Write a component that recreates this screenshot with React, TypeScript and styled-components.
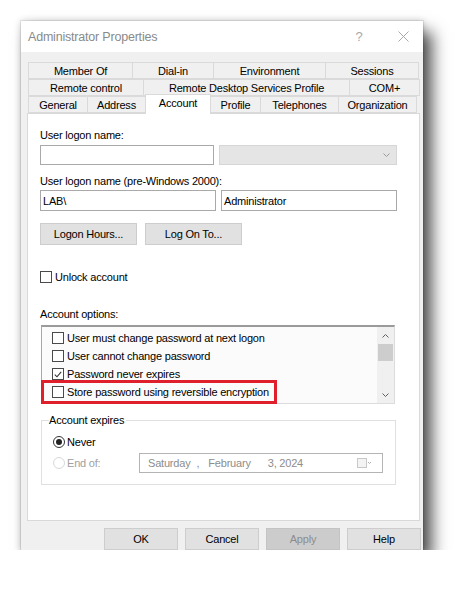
import * as React from 'react'
import styled, { createGlobalStyle } from 'styled-components'

const GlobalStyle = createGlobalStyle`
  body {
    margin: 0;
    background: #fff;
    font-family: 'Liberation Sans', Arial, sans-serif;
    font-size: 11px;
    letter-spacing: -0.2px;
    color: #000;
  }
  * { box-sizing: border-box; }
`

const Page = styled.div`
  padding: 21px 0 0 21px;
`

const Window = styled.div`
  width: 402px;
  height: 529px;
  background: #f0f0f0;
  display: flex;
  flex-direction: column;
  overflow: hidden;
  box-shadow: 0 0 0 1px rgba(0, 0, 0, 0.08), 9px 11px 15px rgba(0, 0, 0, 0.68), 0 0 7px rgba(0, 0, 0, 0.2);
`

const TitleBar = styled.div`
  height: 31px;
  flex: none;
  background: #fff;
  display: flex;
  align-items: center;
  padding-left: 7px;
`

const Title = styled.div`
  flex: 1;
  font-size: 12.5px;
  color: #8a8a8a;
`

const TitleButton = styled.div<{ $w: number }>`
  width: ${(p) => p.$w}px;
  height: 31px;
  display: flex;
  align-items: center;
  justify-content: center;
  color: #a8a8a8;
  font-size: 13px;
`

const TabStrip = styled.div`
  margin: 10px 3px 0 6px;
  display: flex;
  flex-direction: column;
`

const TabRow = styled.div`
  display: flex;
  height: 17px;
  padding-left: 1px;
`

const Tab = styled.div<{ $w: number; $active?: boolean }>`
  width: ${(p) => p.$w}px;
  height: ${(p) => (p.$active ? 20 : 17)}px;
  margin-top: ${(p) => (p.$active ? -2 : 0)}px;
  position: relative;
  z-index: ${(p) => (p.$active ? 2 : 1)};
  background: ${(p) => (p.$active ? '#fff' : '#f0f0f0')};
  border: 1px solid #dadada;
  border-bottom: ${(p) => (p.$active ? 'none' : '1px solid #dadada')};
  margin-right: -1px;
  display: flex;
  align-items: ${(p) => (p.$active ? 'flex-start' : 'center')};
  padding-top: ${(p) => (p.$active ? 2 : 0)}px;
  justify-content: center;
  white-space: nowrap;
`

const Panel = styled.div`
  margin: 0 3px 0 6px;
  height: 408px;
  flex: none;
  background: #fff;
  border: 1px solid #d9d9d9;
  padding: 0 22px 0 12px;
  display: flex;
  flex-direction: column;
`

const Label = styled.div<{ $mt: number }>`
  margin-top: ${(p) => p.$mt}px;
  line-height: 14px;
  height: 14px;
`

const FieldRow = styled.div<{ $mt: number; $h: number }>`
  margin-top: ${(p) => p.$mt}px;
  height: ${(p) => p.$h}px;
  display: flex;
  gap: 5px;
`

const TextBox = styled.div`
  flex: 1;
  border: 1px solid #a9a9a9;
  background: #fff;
  display: flex;
  align-items: center;
  padding-left: 2px;
`

const ComboBox = styled.div`
  flex: 1;
  border: 1px solid #d6d6d6;
  background: #e5e5e5;
  display: flex;
  align-items: center;
  justify-content: flex-end;
  padding-right: 6px;
`

const ButtonRow = styled.div<{ $mt: number }>`
  margin-top: ${(p) => p.$mt}px;
  display: flex;
  gap: 8px;
`

const Button = styled.div<{ $w: number; $disabled?: boolean }>`
  width: ${(p) => p.$w}px;
  height: 22px;
  background: ${(p) => (p.$disabled ? '#cccccc' : '#e1e1e1')};
  border: 1px solid ${(p) => (p.$disabled ? '#c4c4c4' : '#cdcdcd')};
  color: ${(p) => (p.$disabled ? '#8d8d8d' : '#000')};
  display: flex;
  align-items: center;
  justify-content: center;
`

const CheckLine = styled.div<{ $mt?: number; $h?: number }>`
  margin-top: ${(p) => p.$mt ?? 0}px;
  height: ${(p) => p.$h ?? 14}px;
  display: flex;
  align-items: center;
  gap: 3px;
  white-space: nowrap;
`

const Box = styled.span<{ $size: number }>`
  width: ${(p) => p.$size}px;
  height: ${(p) => p.$size}px;
  flex: none;
  border: 1px solid #4a4a4a;
  background: #fff;
  display: flex;
  align-items: center;
  justify-content: center;
`

const List = styled.div`
  margin-top: 4px;
  margin-right: 2px;
  margin-left: 1px;
  height: 79px;
  position: relative;
  border: 1px solid #dcdcdc;
  border-top: 2px solid #9a9a9a;
  border-left-color: #a8a8a8;
  background: #fbfbfb;
  display: flex;
`

const ListItems = styled.div`
  flex: 1;
  padding: 2px 0 0 10px;
  display: flex;
  flex-direction: column;
`

const ScrollBar = styled.div`
  width: 17px;
  flex: none;
  background: #f0f0f0;
  display: flex;
  flex-direction: column;
`

const ScrollArrow = styled.div`
  height: 17px;
  display: flex;
  align-items: center;
  justify-content: center;
`

const Thumb = styled.div`
  height: 17px;
  margin: 0 1px;
  background: #cdcdcd;
`

const Track = styled.div`
  flex: 1;
`

const Highlight = styled.div`
  position: absolute;
  left: -1px;
  top: 53px;
  width: 236px;
  height: 24px;
  border: 3px solid #e01f2d;
  pointer-events: none;
`

const Group = styled.fieldset`
  margin: 9px 1px 0 1px;
  padding: 0 0 11px 11px;
  border: 1px solid #e0e0e0;
  min-width: 0;
`

const Legend = styled.legend`
  padding: 0 2px 0 0;
  margin-left: -4px;
  line-height: 14px;
`

const RadioLine = styled.div<{ $mt: number; $h: number; $disabled?: boolean }>`
  margin-top: ${(p) => p.$mt}px;
  height: ${(p) => p.$h}px;
  display: flex;
  align-items: center;
  color: ${(p) => (p.$disabled ? '#a0a0a0' : '#000')};
  white-space: nowrap;
`

const Radio = styled.span<{ $checked?: boolean; $disabled?: boolean }>`
  width: 12px;
  height: 12px;
  flex: none;
  border-radius: 50%;
  border: 1px solid ${(p) => (p.$disabled ? '#d8d8d8' : '#333')};
  display: flex;
  align-items: center;
  justify-content: center;
  margin-right: 2px;
  &::after {
    content: '';
    display: ${(p) => (p.$checked ? 'block' : 'none')};
    width: 6px;
    height: 6px;
    border-radius: 50%;
    background: #222;
  }
`

const RadioText = styled.span<{ $w?: number }>`
  width: ${(p) => (p.$w ? `${p.$w}px` : 'auto')};
`

const DatePicker = styled.div`
  width: 244px;
  height: 20px;
  border: 1px solid #b4b4b4;
  background: #fff;
  display: flex;
  align-items: center;
  padding-left: 8px;
  color: #8d8d8d;
`

const DatePart = styled.span<{ $ml: number }>`
  margin-left: ${(p) => p.$ml}px;
`

const CalendarIcon = styled.span`
  margin-left: auto;
  margin-right: 10px;
  display: flex;
  align-items: center;
`

const Footer = styled.div`
  margin-top: 7px;
  padding-right: 2px;
  display: flex;
  justify-content: flex-end;
  gap: 7px;
`

const Chevron = ({ up, color = '#7a7a7a' }: { up?: boolean; color?: string }) => (
  <svg width='7' height='4' viewBox='0 0 7 4'>
    <path d={up ? 'M0.5 3.5L3.5 0.5L6.5 3.5' : 'M0.5 0.5L3.5 3.5L6.5 0.5'} fill='none' stroke={color} strokeWidth='1' />
  </svg>
)

const Check = ({ checked, size = 12 }: { checked?: boolean; size?: number }) => (
  <Box $size={size}>
    {checked && (
      <svg width='8' height='7' viewBox='0 0 8 7'>
        <path d='M0.8 3.6L3 5.8L7.2 0.8' fill='none' stroke='#333' strokeWidth='1.1' />
      </svg>
    )}
  </Box>
)

const tabRows = [
  [
    { label: 'Member Of', w: 105 },
    { label: 'Dial-in', w: 82 },
    { label: 'Environment', w: 113 },
    { label: 'Sessions', w: 94 },
  ],
  [
    { label: 'Remote control', w: 116 },
    { label: 'Remote Desktop Services Profile', w: 207 },
    { label: 'COM+', w: 71 },
  ],
  [
    { label: 'General', w: 60 },
    { label: 'Address', w: 59 },
    { label: 'Account', w: 66, active: true },
    { label: 'Profile', w: 51 },
    { label: 'Telephones', w: 79 },
    { label: 'Organization', w: 79 },
  ],
]

const options = [
  { label: 'User must change password at next logon', checked: false },
  { label: 'User cannot change password', checked: false },
  { label: 'Password never expires', checked: true },
  { label: 'Store password using reversible encryption', checked: false },
]

const App = () => {
  return (
    <Page>
      <GlobalStyle />
      <Window>
        <TitleBar>
          <Title>Administrator Properties</Title>
          <TitleButton $w={48}>?</TitleButton>
          <TitleButton $w={40}>
            <svg width='11' height='11' viewBox='0 0 11 11'>
              <path d='M0.5 0.5L10.5 10.5M10.5 0.5L0.5 10.5' stroke='#a8a8a8' strokeWidth='1' />
            </svg>
          </TitleButton>
        </TitleBar>

        <TabStrip>
          {tabRows.map((row, i) => (
            <TabRow key={i}>
              {row.map((t) => (
                <Tab key={t.label} $w={t.w} $active={'active' in t && t.active}>
                  {t.label}
                </Tab>
              ))}
            </TabRow>
          ))}
        </TabStrip>

        <Panel>
          <Label $mt={14}>User logon name:</Label>
          <FieldRow $mt={3} $h={20}>
            <TextBox />
            <ComboBox>
              <Chevron color='#9a9a9a' />
            </ComboBox>
          </FieldRow>

          <Label $mt={9}>User logon name (pre-Windows 2000):</Label>
          <FieldRow $mt={2} $h={21}>
            <TextBox>LAB\</TextBox>
            <TextBox>Administrator</TextBox>
          </FieldRow>

          <ButtonRow $mt={12}>
            <Button $w={97}>Logon Hours...</Button>
            <Button $w={97}>Log On To...</Button>
          </ButtonRow>

          <CheckLine $mt={25}>
            <Check />
            Unlock account
          </CheckLine>

          <Label $mt={23}>Account options:</Label>
          <List>
            <ListItems>
              {options.map((o) => (
                <CheckLine key={o.label} $h={18}>
                  <Check checked={o.checked} />
                  {o.label}
                </CheckLine>
              ))}
            </ListItems>
            <ScrollBar>
              <ScrollArrow>
                <Chevron up color='#606060' />
              </ScrollArrow>
              <Thumb />
              <Track />
              <ScrollArrow>
                <Chevron color='#606060' />
              </ScrollArrow>
            </ScrollBar>
            <Highlight />
          </List>

          <Group>
            <Legend>Account expires</Legend>
            <RadioLine $mt={8} $h={14}>
              <Radio $checked />
              <RadioText>Never</RadioText>
            </RadioLine>
            <RadioLine $mt={4} $h={20} $disabled>
              <Radio $disabled />
              <RadioText $w={72}>End of:</RadioText>
              <DatePicker>
                <DatePart $ml={0}>Saturday</DatePart>
                <DatePart $ml={6}>,</DatePart>
                <DatePart $ml={9}>February</DatePart>
                <DatePart $ml={17}>3, 2024</DatePart>
                <CalendarIcon>
                  <svg width='15' height='10' viewBox='0 0 15 10'>
                    <rect x='0.5' y='0.5' width='9' height='9' fill='#f4f4f4' stroke='#c8c8c8' />
                    <path d='M11 4L12.5 5.5L14 4' fill='none' stroke='#b0b0b0' />
                  </svg>
                </CalendarIcon>
              </DatePicker>
            </RadioLine>
          </Group>
        </Panel>

        <Footer>
          <Button $w={74}>OK</Button>
          <Button $w={74}>Cancel</Button>
          <Button $w={74} $disabled>
            Apply
          </Button>
          <Button $w={74}>Help</Button>
        </Footer>
      </Window>
    </Page>
  )
}

export default App
